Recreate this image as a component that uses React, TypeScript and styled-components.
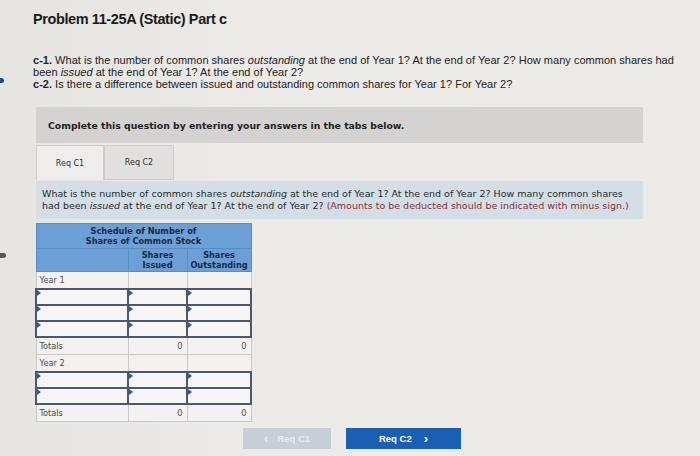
import React from "react";
import styled, { createGlobalStyle } from "styled-components";

const Global = createGlobalStyle`
  html, body { margin: 0; padding: 0; background: #eae9e6; }
  body { width: 700px; height: 456px; overflow: hidden; }
`;

const Page = styled.div`
  position: relative;
  width: 700px;
  height: 456px;
  box-sizing: border-box;
  padding: 10px 20px 0 33px;
  font-family: "Liberation Sans", Arial, sans-serif;
  color: #1d1d1d;
  background: linear-gradient(90deg, #e6e5e2 0%, #ecebe8 40%, #eceae7 100%);
`;

const EdgeMark = styled.div<{ $top: number; $w: number; $color: string }>`
  position: absolute;
  left: 0;
  top: ${(p) => p.$top}px;
  width: ${(p) => p.$w}px;
  height: 5px;
  border-radius: 0 3px 3px 0;
  background: ${(p) => p.$color};
`;

const Title = styled.h1`
  margin: 0;
  font-size: 14.5px;
  font-weight: 700;
  line-height: 18px;
  letter-spacing: -0.4px;
  color: #1b1b1b;
`;

const Question = styled.div`
  margin: 26px 0 0 0;
  font-size: 11px;
  line-height: 12px;
  letter-spacing: 0.02px;
  color: #232323;
`;

const Line = styled.div`
  white-space: nowrap;
`;

const Panel = styled.div`
  margin: 17px 0 0 3px;
  width: 607px;
  font-family: "DejaVu Sans", Verdana, sans-serif;
`;

const InstructionBar = styled.div`
  height: 36px;
  display: flex;
  align-items: center;
  padding-left: 12px;
  background: #d4d3d1;
  font-size: 9.3px;
  font-weight: 700;
  color: #222;
`;

const Tabs = styled.div`
  display: flex;
  margin-top: 2px;
  height: 35px;
`;

const Tab = styled.div<{ $active?: boolean }>`
  width: ${(p) => (p.$active ? 68 : 70)}px;
  box-sizing: border-box;
  display: flex;
  align-items: center;
  justify-content: center;
  font-size: 8px;
  color: #333;
  background: ${(p) => (p.$active ? "#efeeec" : "#e1e0de")};
  border: 1px solid #cfcecb;
  border-bottom: ${(p) => (p.$active ? "none" : "1px solid #cfcecb")};
`;

const TabContent = styled.div`
  margin-top: 1px;
  height: 38px;
  box-sizing: border-box;
  padding: 7px 10px 0 6px;
  background: #d3dee7;
  font-size: 9.5px;
  line-height: 12px;
  letter-spacing: 0;
  color: #2a2a2a;
`;

const Warn = styled.span`
  color: #8c2f35;
`;

const Table = styled.table`
  margin: 4px 0 0 -1px;
  border-collapse: collapse;
  table-layout: fixed;
  width: 215px;
  font-family: "DejaVu Sans", Verdana, sans-serif;
`;

const HeadCell = styled.th<{ $tall?: boolean }>`
  height: ${(p) => (p.$tall ? 24 : 22)}px;
  padding: 0;
  background: #6c9fd6;
  border: 1px solid #5a8cc4;
  font-size: 8.2px;
  line-height: 10px;
  font-weight: 700;
  color: #172a44;
  text-align: center;
  vertical-align: middle;
`;

const LabelCell = styled.td`
  height: 16px;
  padding: 0 0 0 3px;
  background: #f3f2f0;
  border: 1px solid #c9c9c7;
  font-size: 8.2px;
  color: #4a4a4a;
  white-space: nowrap;
`;

const ValueCell = styled.td`
  height: 16px;
  padding: 0 4px 0 0;
  background: #f3f2f0;
  border: 1px solid #c9c9c7;
  font-size: 8.2px;
  color: #4a4a4a;
  text-align: right;
`;

const InputCell = styled.td`
  position: relative;
  height: 14px;
  padding: 0;
  background: #f6f6f4;
  border: 2px solid #4a5870;
  &::before {
    content: "";
    position: absolute;
    left: 0;
    top: 0;
    border-top: 3px solid transparent;
    border-bottom: 3px solid transparent;
    border-left: 4px solid #2e5a93;
  }
`;

const Buttons = styled.div`
  display: flex;
  gap: 15px;
  margin: 6px 0 0 207px;
`;

const NavButton = styled.div<{ $primary?: boolean }>`
  height: 21px;
  width: ${(p) => (p.$primary ? 115 : 88)}px;
  display: flex;
  align-items: center;
  justify-content: center;
  gap: ${(p) => (p.$primary ? 12 : 9)}px;
  font-family: "Liberation Sans", Arial, sans-serif;
  font-size: 9.5px;
  font-weight: 700;
  color: ${(p) => (p.$primary ? "#ffffff" : "#e8edf1")};
  background: ${(p) => (p.$primary ? "#1a5fb4" : "#c6cfd7")};
`;

const Chevron = styled.span`
  font-size: 13px;
  font-weight: 700;
  line-height: 10px;
`;

const InputRow = () => (
  <tr>
    <InputCell />
    <InputCell />
    <InputCell />
  </tr>
);

export default function App() {
  return (
    <>
      <Global />
      <Page>
        <EdgeMark $top={78} $w={4} $color="#1c4f8f" />
        <EdgeMark $top={253} $w={6} $color="#55595e" />
        <Title>Problem 11-25A (Static) Part c</Title>
        <Question>
          <Line>
            <b>c-1.</b> What is the number of common shares{" "}
            <i>outstanding</i> at the end of Year 1? At the end of Year 2? How
            many common shares had
          </Line>
          <Line>
            been <i>issued</i> at the end of Year 1? At the end of Year 2?
          </Line>
          <Line>
            <b>c-2.</b> Is there a difference between issued and outstanding
            common shares for Year 1? For Year 2?
          </Line>
        </Question>
        <Panel>
          <InstructionBar>
            Complete this question by entering your answers in the tabs below.
          </InstructionBar>
          <Tabs>
            <Tab $active>Req C1</Tab>
            <Tab>Req C2</Tab>
          </Tabs>
          <TabContent>
            <Line>
              What is the number of common shares <i>outstanding</i> at the end
              of Year 1? At the end of Year 2? How many common shares
            </Line>
            <Line>
              had been <i>issued</i> at the end of Year 1? At the end of Year
              2?{" "}
              <Warn>
                (Amounts to be deducted should be indicated with minus sign.)
              </Warn>
            </Line>
          </TabContent>
          <Table>
            <colgroup>
              <col style={{ width: 92 }} />
              <col style={{ width: 59 }} />
              <col style={{ width: 64 }} />
            </colgroup>
            <thead>
              <tr>
                <HeadCell $tall colSpan={3}>
                  Schedule of Number of
                  <br />
                  Shares of Common Stock
                </HeadCell>
              </tr>
              <tr>
                <HeadCell />
                <HeadCell>
                  Shares
                  <br />
                  Issued
                </HeadCell>
                <HeadCell>
                  Shares
                  <br />
                  Outstanding
                </HeadCell>
              </tr>
            </thead>
            <tbody>
              <tr>
                <LabelCell>Year 1</LabelCell>
                <ValueCell />
                <ValueCell />
              </tr>
              <InputRow />
              <InputRow />
              <InputRow />
              <tr>
                <LabelCell>Totals</LabelCell>
                <ValueCell>0</ValueCell>
                <ValueCell>0</ValueCell>
              </tr>
              <tr>
                <LabelCell>Year 2</LabelCell>
                <ValueCell />
                <ValueCell />
              </tr>
              <InputRow />
              <InputRow />
              <tr>
                <LabelCell>Totals</LabelCell>
                <ValueCell>0</ValueCell>
                <ValueCell>0</ValueCell>
              </tr>
            </tbody>
          </Table>
          <Buttons>
            <NavButton>
              <Chevron>&lsaquo;</Chevron>
              <span>Req C1</span>
            </NavButton>
            <NavButton $primary>
              <span>Req C2</span>
              <Chevron>&rsaquo;</Chevron>
            </NavButton>
          </Buttons>
        </Panel>
      </Page>
    </>
  );
}
